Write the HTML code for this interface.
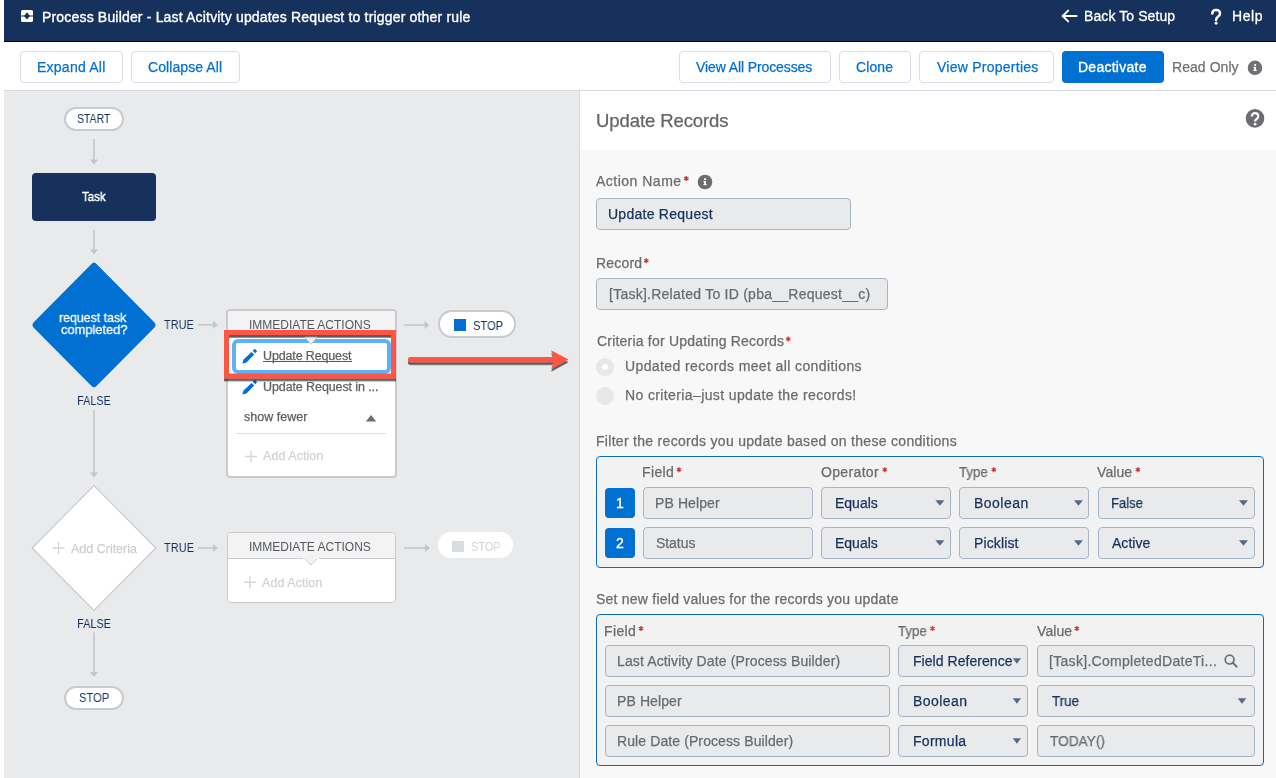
<!DOCTYPE html><html><head><meta charset="utf-8"><style>
html,body{margin:0;padding:0;width:1276px;height:778px;overflow:hidden;background:#fff;font-family:"Liberation Sans", sans-serif;}
.t{-webkit-text-stroke:0.25px currentColor;will-change:transform;-webkit-font-smoothing:antialiased;}
</style></head><body>
<div style="position:absolute;left:4px;top:0px;width:1272px;height:41px;box-sizing:border-box;background:#16325c"></div><div style="position:absolute;left:4px;top:41px;width:1272px;height:1px;box-sizing:border-box;background:#000"></div><svg style="position:absolute;left:0;top:0" width="1276" height="42">
<rect x="21" y="10" width="12" height="12" rx="1.6" fill="#fff"/>
<rect x="21" y="15" width="12" height="2" fill="#8a98ad"/>
<path d="M27 12.2 L30 16 L27 19.6 L24 16 Z" fill="#16325c"/>
<path d="M1068.2 10.6 L1062.6 16 L1068.2 21.4 M1062.8 16 H1076.6" stroke="#fff" stroke-width="1.9" fill="none" stroke-linecap="round" stroke-linejoin="round"/>
<path d="M1212.3 13.4 C1212.3 11.2 1214 9.9 1216.1 9.9 C1218.4 9.9 1220 11.3 1220 13.4 C1220 15.4 1218.6 16.2 1217.4 17.2 C1216.4 18 1216.1 18.7 1216.1 20" stroke="#fff" stroke-width="2.5" fill="none" stroke-linecap="round"/>
<circle cx="1216.1" cy="23.3" r="1.45" fill="#fff"/>
</svg><div style="position:absolute;left:4px;top:90px;width:1272px;height:1px;box-sizing:border-box;background:#d8d8dc"></div><div style="position:absolute;left:20px;top:51px;width:103px;height:32px;box-sizing:border-box;background:#fff;border:1px solid #d8dde6;border-radius:4px"></div><div style="position:absolute;left:131px;top:51px;width:109px;height:32px;box-sizing:border-box;background:#fff;border:1px solid #d8dde6;border-radius:4px"></div><div style="position:absolute;left:679px;top:51px;width:152px;height:32px;box-sizing:border-box;background:#fff;border:1px solid #d8dde6;border-radius:4px"></div><div style="position:absolute;left:839px;top:51px;width:72px;height:32px;box-sizing:border-box;background:#fff;border:1px solid #d8dde6;border-radius:4px"></div><div style="position:absolute;left:919px;top:51px;width:135px;height:32px;box-sizing:border-box;background:#fff;border:1px solid #d8dde6;border-radius:4px"></div><div style="position:absolute;left:1062px;top:51px;width:102px;height:32px;box-sizing:border-box;background:#0070d2;border-radius:4px"></div><svg style="position:absolute;left:1247px;top:60px" width="16" height="16"><circle cx="8" cy="7.8" r="7.3" fill="#6f7174"/>
<rect x="7.1" y="6.9" width="1.9" height="4" fill="#fff"/><circle cx="8.1" cy="5.0" r="1.1" fill="#fff"/><rect x="6.4" y="6.9" width="1.5" height="1.1" fill="#fff"/><rect x="6.3" y="9.9" width="3.6" height="1.0" fill="#fff"/></svg><div style="position:absolute;left:4px;top:91px;width:575px;height:687px;box-sizing:border-box;background:#e9eaec"></div><div style="position:absolute;left:579px;top:91px;width:1px;height:687px;box-sizing:border-box;background:#d6d7da"></div><div style="position:absolute;left:64px;top:107px;width:60px;height:24px;box-sizing:border-box;background:#fff;border:2px solid #c7cace;border-radius:12.0px"></div><div style="position:absolute;left:32px;top:173px;width:124px;height:48px;box-sizing:border-box;background:#16325c;border-radius:4px"></div><div style="position:absolute;left:226px;top:309px;width:171px;height:169px;box-sizing:border-box;background:#fff;border:2px solid #c7cace;border-radius:4px"></div><div style="position:absolute;left:228px;top:311px;width:167px;height:26px;box-sizing:border-box;background:#f3f3f3;border-radius:2px 2px 0 0"></div><div style="position:absolute;left:438px;top:310px;width:78px;height:28px;box-sizing:border-box;background:#fff;border:2px solid #c7cace;border-radius:14.0px"></div><div style="position:absolute;left:454px;top:319px;width:12px;height:12px;box-sizing:border-box;background:#0070d2"></div><div style="position:absolute;left:231.5px;top:338.5px;width:159.5px;height:35.5px;box-sizing:border-box;background:#fff;border:4px solid #5eb0fb;border-radius:6px"></div><svg style="position:absolute;left:238px;top:345px" width="24" height="24" viewBox="0 0 24 24"><path d="M4.3 18.6 L5.5 14.6 L13.6 6.9 L16.2 9.4 L8.5 17.4 Z M14.7 5.8 L16.3 4.2 Q16.8 3.8 17.3 4.2 L18.8 5.7 Q19.2 6.2 18.8 6.6 L17.2 8.2 Z" fill="#0070d2"/></svg><div style="position:absolute;left:263px;top:361px;width:89px;height:1px;box-sizing:border-box;background:#0070d2"></div><svg style="position:absolute;left:238px;top:376px" width="24" height="24" viewBox="0 0 24 24"><path d="M4.3 18.6 L5.5 14.6 L13.6 6.9 L16.2 9.4 L8.5 17.4 Z M14.7 5.8 L16.3 4.2 Q16.8 3.8 17.3 4.2 L18.8 5.7 Q19.2 6.2 18.8 6.6 L17.2 8.2 Z" fill="#0070d2"/></svg><svg style="position:absolute;left:0;top:0" width="580" height="778"><path d="M365.8 421.4 L376.2 421.4 L371 415 Z" fill="#706e6b"/></svg><div style="position:absolute;left:236px;top:433px;width:150px;height:1px;box-sizing:border-box;background:#d8dde6"></div><svg style="position:absolute;left:0;top:0" width="580" height="778"><path d="M251 450.5 V462.5 M245 456.5 H257" stroke="#d4d6d9" stroke-width="1.4"/></svg><svg style="position:absolute;left:0;top:0" width="580" height="778">
<defs><filter id="sh" x="-20%" y="-20%" width="140%" height="160%"><feDropShadow dx="0" dy="2.7" stdDeviation="0.6" flood-color="#000" flood-opacity="0.62"/></filter></defs>
<g filter="url(#sh)">
<rect x="226.5" y="332.5" width="167" height="43.5" fill="none" stroke="#ff5545" stroke-width="5"/>
<path d="M410.5 359.6 L556 359.6" stroke="#ff5545" stroke-width="5.2" stroke-linecap="round"/>
<path d="M551 350.3 L568.6 359.6 L551 368.9 L555 359.6 Z" fill="#ff5545"/>
</g>
<path d="M305 337.3 L317 337.3 L311 344.3 Z" fill="#f0f0f0" stroke="#c3c6cb" stroke-width="1" stroke-linejoin="round"/>
</svg><div style="position:absolute;left:64px;top:686px;width:60px;height:24px;box-sizing:border-box;background:#fff;border:2px solid #c7cace;border-radius:12.0px"></div><div style="position:absolute;left:226.5px;top:532px;width:169.0px;height:70.5px;box-sizing:border-box;background:#fff;border:1px solid #c7cace;border-radius:4px"></div><div style="position:absolute;left:227.5px;top:533px;width:167.0px;height:26px;box-sizing:border-box;background:#f3f3f3;border-bottom:1px solid #c7cace;border-radius:3px 3px 0 0"></div><svg style="position:absolute;left:0;top:0" width="580" height="778"><path d="M304.5 558.5 L317.5 558.5 L311 565 Z" fill="#f3f3f3" stroke="#c7cace" stroke-width="1"/><rect x="303" y="557.6" width="16" height="1.4" fill="#f3f3f3"/></svg><svg style="position:absolute;left:0;top:0" width="580" height="778"><path d="M250 576.2 V588.2 M244 582.2 H256" stroke="#d4d6d9" stroke-width="1.4"/></svg><div style="position:absolute;left:438px;top:532px;width:75px;height:26px;box-sizing:border-box;background:#fff;border:0px solid #fff;border-radius:13.0px"></div><div style="position:absolute;left:452px;top:540.5px;width:12px;height:11.0px;box-sizing:border-box;background:#d8dce0"></div><svg style="position:absolute;left:0;top:0" width="580" height="778"><line x1="94" y1="139" x2="94" y2="161.5" stroke="#c2c6cb" stroke-width="1.6"/><path d="M90 159.5 L98 159.5 L94 164.5 Z" fill="#c2c6cb"/><line x1="94" y1="230" x2="94" y2="251.5" stroke="#c2c6cb" stroke-width="1.6"/><path d="M90 249.5 L98 249.5 L94 254.5 Z" fill="#c2c6cb"/><path d="M94 262.5 Q95.5 262.5 96.5 264 L154.5 322.5 Q156.5 325 154.5 327.5 L96.5 386 Q94 388.5 91.5 386 L33.5 327.5 Q31.5 325 33.5 322.5 L91.5 264 Q92.5 262.5 94 262.5 Z" fill="#0070d2"/><line x1="198" y1="324.8" x2="215" y2="324.8" stroke="#c2c6cb" stroke-width="1.6"/><path d="M213 320.8 L213 328.8 L218 324.8 Z" fill="#c2c6cb"/><line x1="94" y1="410" x2="94" y2="474.5" stroke="#c2c6cb" stroke-width="1.6"/><path d="M90 472.5 L98 472.5 L94 477.5 Z" fill="#c2c6cb"/><line x1="404" y1="325" x2="426.5" y2="325" stroke="#c2c6cb" stroke-width="1.6"/><path d="M424.5 321 L424.5 329 L429.5 325 Z" fill="#c2c6cb"/><path d="M94 485.6 L155.8 548 L94 610.4 L32.2 548 Z" fill="#fff" stroke="#c6c9ce" stroke-width="1.1" stroke-linejoin="round"/><path d="M58.5 542 V554 M52.5 548 H64.5" stroke="#d4d6d9" stroke-width="1.4"/><line x1="198" y1="548" x2="215" y2="548" stroke="#c2c6cb" stroke-width="1.6"/><path d="M213 544 L213 552 L218 548 Z" fill="#c2c6cb"/><line x1="94" y1="632.5" x2="94" y2="674" stroke="#c2c6cb" stroke-width="1.6"/><path d="M90 672 L98 672 L94 677 Z" fill="#c2c6cb"/><line x1="404" y1="548" x2="427" y2="548" stroke="#c2c6cb" stroke-width="1.6"/><path d="M425 544 L425 552 L430 548 Z" fill="#c2c6cb"/></svg><div style="position:absolute;left:580px;top:91px;width:696px;height:59px;box-sizing:border-box;background:#fff"></div><div style="position:absolute;left:580px;top:150px;width:696px;height:628px;box-sizing:border-box;background:#f8f8f8"></div><svg style="position:absolute;left:1245px;top:108px" width="20" height="21"><circle cx="10" cy="10.4" r="9.3" fill="#6b6d70"/>
<path d="M6.8 8.4 C6.8 6.4 8.2 5.2 10 5.2 C12 5.2 13.3 6.4 13.3 8.3 C13.3 10 12 10.7 11.1 11.4 C10.5 11.9 10.1 12.4 10.1 13.6" stroke="#fff" stroke-width="2.2" fill="none"/><circle cx="10.1" cy="16.2" r="1.35" fill="#fff"/></svg><svg style="position:absolute;left:0;top:0" width="1276" height="778"><path d="M686.30 176.10 L686.30 181.10 M684.13 177.35 L688.47 179.85 M688.47 177.35 L684.13 179.85 " stroke="#c23934" stroke-width="1.3"/></svg><svg style="position:absolute;left:697px;top:174px" width="16" height="16"><circle cx="8" cy="8" r="7.3" fill="#6b6d70"/>
<rect x="7.1" y="7.1" width="1.9" height="4" fill="#fff"/><circle cx="8.1" cy="5.2" r="1.1" fill="#fff"/><rect x="6.4" y="7.1" width="1.5" height="1.1" fill="#fff"/><rect x="6.3" y="10.1" width="3.6" height="1.0" fill="#fff"/></svg><div style="position:absolute;left:596px;top:198px;width:255px;height:32px;box-sizing:border-box;background:#e9eaec;border:1px solid #a6b4c6;border-radius:4px"></div><svg style="position:absolute;left:0;top:0" width="1276" height="778"><path d="M646.30 258.30 L646.30 263.30 M644.13 259.55 L648.47 262.05 M648.47 259.55 L644.13 262.05 " stroke="#c23934" stroke-width="1.3"/></svg><div style="position:absolute;left:596px;top:278px;width:292px;height:32px;box-sizing:border-box;background:#e9eaec;border:1px solid #a6b4c6;border-radius:4px"></div><svg style="position:absolute;left:0;top:0" width="1276" height="778"><path d="M788.20 336.50 L788.20 341.50 M786.03 337.75 L790.37 340.25 M790.37 337.75 L786.03 340.25 " stroke="#c23934" stroke-width="1.3"/></svg><svg style="position:absolute;left:0;top:0" width="1276" height="778">
<circle cx="605" cy="367" r="9" fill="#e6e7e9"/><circle cx="605" cy="367" r="3" fill="#fff"/>
<circle cx="605" cy="396" r="9" fill="#e6e7e9"/></svg><div style="position:absolute;left:596px;top:456px;width:668px;height:112px;box-sizing:border-box;background:#f2f2f2;border:1px solid #0e6bb9;border-radius:4px"></div><svg style="position:absolute;left:0;top:0" width="1276" height="778"><path d="M679.00 467.20 L679.00 472.20 M676.83 468.45 L681.17 470.95 M681.17 468.45 L676.83 470.95 " stroke="#c23934" stroke-width="1.3"/></svg><svg style="position:absolute;left:0;top:0" width="1276" height="778"><path d="M884.80 467.20 L884.80 472.20 M882.63 468.45 L886.97 470.95 M886.97 468.45 L882.63 470.95 " stroke="#c23934" stroke-width="1.3"/></svg><svg style="position:absolute;left:0;top:0" width="1276" height="778"><path d="M993.80 467.20 L993.80 472.20 M991.63 468.45 L995.97 470.95 M995.97 468.45 L991.63 470.95 " stroke="#c23934" stroke-width="1.3"/></svg><svg style="position:absolute;left:0;top:0" width="1276" height="778"><path d="M1137.90 467.20 L1137.90 472.20 M1135.73 468.45 L1140.07 470.95 M1140.07 468.45 L1135.73 470.95 " stroke="#c23934" stroke-width="1.3"/></svg><div style="position:absolute;left:605px;top:488px;width:30px;height:30px;box-sizing:border-box;background:#0070d2;border-radius:4px"></div><div style="position:absolute;left:643px;top:487px;width:169.5px;height:32px;box-sizing:border-box;background:#e9eaec;border:1px solid #a6b4c6;border-radius:4px"></div><div style="position:absolute;left:821px;top:487px;width:130px;height:32px;box-sizing:border-box;background:#e9eaec;border:1px solid #a6b4c6;border-radius:4px"></div><svg style="position:absolute;left:0;top:0" width="1276" height="778"><path d="M935.4 500.2 L944.4 500.2 L939.9 505.8 Z" fill="#54698d"/></svg><div style="position:absolute;left:959px;top:487px;width:130px;height:32px;box-sizing:border-box;background:#e9eaec;border:1px solid #a6b4c6;border-radius:4px"></div><svg style="position:absolute;left:0;top:0" width="1276" height="778"><path d="M1074 500.2 L1083 500.2 L1078.5 505.8 Z" fill="#54698d"/></svg><div style="position:absolute;left:1097.5px;top:487px;width:157.0px;height:32px;box-sizing:border-box;background:#e9eaec;border:1px solid #a6b4c6;border-radius:4px"></div><svg style="position:absolute;left:0;top:0" width="1276" height="778"><path d="M1239 500.2 L1248 500.2 L1243.5 505.8 Z" fill="#54698d"/></svg><div style="position:absolute;left:605px;top:528px;width:30px;height:30px;box-sizing:border-box;background:#0070d2;border-radius:4px"></div><div style="position:absolute;left:643px;top:527px;width:169.5px;height:32px;box-sizing:border-box;background:#e9eaec;border:1px solid #a6b4c6;border-radius:4px"></div><div style="position:absolute;left:821px;top:527px;width:130px;height:32px;box-sizing:border-box;background:#e9eaec;border:1px solid #a6b4c6;border-radius:4px"></div><svg style="position:absolute;left:0;top:0" width="1276" height="778"><path d="M935.4 540.2 L944.4 540.2 L939.9 545.8 Z" fill="#54698d"/></svg><div style="position:absolute;left:959px;top:527px;width:130px;height:32px;box-sizing:border-box;background:#e9eaec;border:1px solid #a6b4c6;border-radius:4px"></div><svg style="position:absolute;left:0;top:0" width="1276" height="778"><path d="M1074 540.2 L1083 540.2 L1078.5 545.8 Z" fill="#54698d"/></svg><div style="position:absolute;left:1097.5px;top:527px;width:157.0px;height:32px;box-sizing:border-box;background:#e9eaec;border:1px solid #a6b4c6;border-radius:4px"></div><svg style="position:absolute;left:0;top:0" width="1276" height="778"><path d="M1239 540.2 L1248 540.2 L1243.5 545.8 Z" fill="#54698d"/></svg><div style="position:absolute;left:596px;top:614px;width:668px;height:152px;box-sizing:border-box;background:#f2f2f2;border:1px solid #0e6bb9;border-radius:4px"></div><svg style="position:absolute;left:0;top:0" width="1276" height="778"><path d="M641.00 626.00 L641.00 631.00 M638.83 627.25 L643.17 629.75 M643.17 627.25 L638.83 629.75 " stroke="#c23934" stroke-width="1.3"/></svg><svg style="position:absolute;left:0;top:0" width="1276" height="778"><path d="M932.50 626.00 L932.50 631.00 M930.33 627.25 L934.67 629.75 M934.67 627.25 L930.33 629.75 " stroke="#c23934" stroke-width="1.3"/></svg><svg style="position:absolute;left:0;top:0" width="1276" height="778"><path d="M1076.80 626.00 L1076.80 631.00 M1074.63 627.25 L1078.97 629.75 M1078.97 627.25 L1074.63 629.75 " stroke="#c23934" stroke-width="1.3"/></svg><div style="position:absolute;left:605px;top:645px;width:285px;height:32px;box-sizing:border-box;background:#e9eaec;border:1px solid #a6b4c6;border-radius:4px"></div><div style="position:absolute;left:898px;top:645px;width:129.5px;height:32px;box-sizing:border-box;background:#e9eaec;border:1px solid #a6b4c6;border-radius:4px"></div><svg style="position:absolute;left:0;top:0" width="1276" height="778"><path d="M1012.8 658.2 L1021 658.2 L1016.9 663.8 Z" fill="#54698d"/></svg><div style="position:absolute;left:1036.5px;top:645px;width:218.0px;height:32px;box-sizing:border-box;background:#e9eaec;border:1px solid #a6b4c6;border-radius:4px"></div><div style="position:absolute;left:605px;top:685px;width:285px;height:32px;box-sizing:border-box;background:#e9eaec;border:1px solid #a6b4c6;border-radius:4px"></div><div style="position:absolute;left:898px;top:685px;width:129.5px;height:32px;box-sizing:border-box;background:#e9eaec;border:1px solid #a6b4c6;border-radius:4px"></div><svg style="position:absolute;left:0;top:0" width="1276" height="778"><path d="M1012.8 698.2 L1021 698.2 L1016.9 703.8 Z" fill="#54698d"/></svg><div style="position:absolute;left:1036.5px;top:685px;width:218.0px;height:32px;box-sizing:border-box;background:#e9eaec;border:1px solid #a6b4c6;border-radius:4px"></div><svg style="position:absolute;left:0;top:0" width="1276" height="778"><path d="M1237.7 698.2 L1246.3 698.2 L1242.0 703.8 Z" fill="#54698d"/></svg><div style="position:absolute;left:605px;top:725px;width:285px;height:32px;box-sizing:border-box;background:#e9eaec;border:1px solid #a6b4c6;border-radius:4px"></div><div style="position:absolute;left:898px;top:725px;width:129.5px;height:32px;box-sizing:border-box;background:#e9eaec;border:1px solid #a6b4c6;border-radius:4px"></div><svg style="position:absolute;left:0;top:0" width="1276" height="778"><path d="M1012.8 738.2 L1021 738.2 L1016.9 743.8 Z" fill="#54698d"/></svg><div style="position:absolute;left:1036.5px;top:725px;width:218.0px;height:32px;box-sizing:border-box;background:#e9eaec;border:1px solid #a6b4c6;border-radius:4px"></div><svg style="position:absolute;left:1222px;top:652.2px" width="18" height="18"><circle cx="7.6" cy="7.6" r="4.4" stroke="#6b6d70" stroke-width="1.7" fill="none"/><path d="M10.8 10.8 L14.6 14.6" stroke="#6b6d70" stroke-width="2" stroke-linecap="round"/></svg>
<div class="t" style="position:absolute;left:41.50px;top:10.00px;font-size:14px;line-height:14px;letter-spacing:0.176px;color:#fff;font-weight:400;white-space:nowrap;-webkit-text-stroke:0.35px #fff;">Process Builder - Last Acitvity updates Request to trigger other rule</div><div class="t" style="position:absolute;left:1084.40px;top:9.00px;font-size:14px;line-height:14px;letter-spacing:0.093px;color:#fff;font-weight:400;white-space:nowrap;-webkit-text-stroke:0.3px #fff;">Back To Setup</div><div class="t" style="position:absolute;left:1231.80px;top:9.00px;font-size:14px;line-height:14px;letter-spacing:0.564px;color:#fff;font-weight:400;white-space:nowrap;-webkit-text-stroke:0.3px #fff;">Help</div><div class="t" style="position:absolute;left:36.60px;top:60.00px;font-size:14px;line-height:14px;letter-spacing:0.242px;color:#0070d2;font-weight:400;white-space:nowrap;">Expand All</div><div class="t" style="position:absolute;left:148.20px;top:60.00px;font-size:14px;line-height:14px;letter-spacing:0.081px;color:#0070d2;font-weight:400;white-space:nowrap;">Collapse All</div><div class="t" style="position:absolute;left:696.30px;top:60.00px;font-size:14px;line-height:14px;letter-spacing:-0.105px;color:#0070d2;font-weight:400;white-space:nowrap;">View All Processes</div><div class="t" style="position:absolute;left:856.20px;top:60.00px;font-size:14px;line-height:14px;letter-spacing:0.102px;color:#0070d2;font-weight:400;white-space:nowrap;">Clone</div><div class="t" style="position:absolute;left:937.40px;top:60.00px;font-size:14px;line-height:14px;letter-spacing:0.251px;color:#0070d2;font-weight:400;white-space:nowrap;">View Properties</div><div class="t" style="position:absolute;left:1078.40px;top:60.00px;font-size:14px;line-height:14px;letter-spacing:0.260px;color:#fff;font-weight:400;white-space:nowrap;-webkit-text-stroke:0.35px #fff;">Deactivate</div><div class="t" style="position:absolute;left:1172.00px;top:60.00px;font-size:14px;line-height:14px;letter-spacing:0.057px;color:#6f7174;font-weight:400;white-space:nowrap;">Read Only</div><div class="t" style="position:absolute;left:77.30px;top:113.00px;font-size:12.5px;line-height:12.5px;letter-spacing:0.000px;color:#16325c;font-weight:400;white-space:nowrap;transform:scaleX(0.8362);transform-origin:0.00px 0;-webkit-text-stroke:0;">START</div><div class="t" style="position:absolute;left:82.00px;top:190.00px;font-size:13px;line-height:13px;letter-spacing:0.000px;color:#fff;font-weight:400;white-space:nowrap;transform:scaleX(0.8814);transform-origin:0.00px 0;-webkit-text-stroke:0.45px #fff;">Task</div><div class="t" style="position:absolute;left:58.60px;top:311.00px;font-size:13.5px;line-height:13.5px;letter-spacing:0.000px;color:#fff;font-weight:400;white-space:nowrap;transform:scaleX(0.9161);transform-origin:0.00px 0;-webkit-text-stroke:0.3px #fff;">request task</div><div class="t" style="position:absolute;left:61.00px;top:323.00px;font-size:13.5px;line-height:13.5px;letter-spacing:0.000px;color:#fff;font-weight:400;white-space:nowrap;transform:scaleX(0.9526);transform-origin:0.00px 0;-webkit-text-stroke:0.3px #fff;">completed?</div><div class="t" style="position:absolute;left:164.00px;top:319.00px;font-size:12.5px;line-height:12.5px;letter-spacing:0.000px;color:#16325c;font-weight:400;white-space:nowrap;transform:scaleX(0.8727);transform-origin:0.00px 0;-webkit-text-stroke:0;">TRUE</div><div class="t" style="position:absolute;left:76.90px;top:395.00px;font-size:12.5px;line-height:12.5px;letter-spacing:0.000px;color:#16325c;font-weight:400;white-space:nowrap;transform:scaleX(0.8650);transform-origin:1.00px 0;-webkit-text-stroke:0;">FALSE</div><div class="t" style="position:absolute;left:249.00px;top:319.00px;font-size:12px;line-height:12px;letter-spacing:-0.009px;color:#54585d;font-weight:400;white-space:nowrap;-webkit-text-stroke:0;">IMMEDIATE ACTIONS</div><div class="t" style="position:absolute;left:472.70px;top:319.00px;font-size:13px;line-height:13px;letter-spacing:0.000px;color:#16325c;font-weight:400;white-space:nowrap;transform:scaleX(0.8554);transform-origin:0.00px 0;-webkit-text-stroke:0;">STOP</div><div class="t" style="position:absolute;left:263.00px;top:350.00px;font-size:12.5px;line-height:12.5px;letter-spacing:-0.143px;color:#5d6064;font-weight:400;white-space:nowrap;">Update Request</div><div class="t" style="position:absolute;left:263.00px;top:381.00px;font-size:12.5px;line-height:12.5px;letter-spacing:-0.098px;color:#5d6064;font-weight:400;white-space:nowrap;">Update Request in ...</div><div class="t" style="position:absolute;left:243.70px;top:411.00px;font-size:12.5px;line-height:12.5px;letter-spacing:0.016px;color:#5d6064;font-weight:400;white-space:nowrap;">show fewer</div><div class="t" style="position:absolute;left:263.00px;top:450.00px;font-size:12.5px;line-height:12.5px;letter-spacing:0.055px;color:#d0d2d5;font-weight:400;white-space:nowrap;">Add Action</div><div class="t" style="position:absolute;left:71.00px;top:543.00px;font-size:12.5px;line-height:12.5px;letter-spacing:-0.004px;color:#ccced2;font-weight:400;white-space:nowrap;">Add Criteria</div><div class="t" style="position:absolute;left:164.00px;top:542.00px;font-size:12.5px;line-height:12.5px;letter-spacing:0.000px;color:#16325c;font-weight:400;white-space:nowrap;transform:scaleX(0.8816);transform-origin:0.00px 0;-webkit-text-stroke:0;">TRUE</div><div class="t" style="position:absolute;left:76.60px;top:618.00px;font-size:12.5px;line-height:12.5px;letter-spacing:0.000px;color:#16325c;font-weight:400;white-space:nowrap;transform:scaleX(0.8703);transform-origin:1.00px 0;-webkit-text-stroke:0;">FALSE</div><div class="t" style="position:absolute;left:79.00px;top:692.00px;font-size:12.5px;line-height:12.5px;letter-spacing:0.000px;color:#16325c;font-weight:400;white-space:nowrap;transform:scaleX(0.8963);transform-origin:0.00px 0;-webkit-text-stroke:0;">STOP</div><div class="t" style="position:absolute;left:248.70px;top:541.00px;font-size:12px;line-height:12px;letter-spacing:0.003px;color:#54585d;font-weight:400;white-space:nowrap;-webkit-text-stroke:0;">IMMEDIATE ACTIONS</div><div class="t" style="position:absolute;left:261.90px;top:577.00px;font-size:12.5px;line-height:12.5px;letter-spacing:0.055px;color:#d0d2d5;font-weight:400;white-space:nowrap;">Add Action</div><div class="t" style="position:absolute;left:471.20px;top:540.00px;font-size:13px;line-height:13px;letter-spacing:0.000px;color:#d3d6da;font-weight:400;white-space:nowrap;transform:scaleX(0.8380);transform-origin:0.00px 0;-webkit-text-stroke:0;">STOP</div><div class="t" style="position:absolute;left:595.50px;top:112.00px;font-size:18.5px;line-height:18.5px;letter-spacing:-0.087px;color:#636568;font-weight:400;white-space:nowrap;">Update Records</div><div class="t" style="position:absolute;left:596.20px;top:174.00px;font-size:14px;line-height:14px;letter-spacing:0.494px;color:#696b6e;font-weight:400;white-space:nowrap;">Action Name</div><div class="t" style="position:absolute;left:608.30px;top:207.00px;font-size:14px;line-height:14px;letter-spacing:0.262px;color:#16325c;font-weight:400;white-space:nowrap;">Update Request</div><div class="t" style="position:absolute;left:595.60px;top:256.00px;font-size:14px;line-height:14px;letter-spacing:0.191px;color:#696b6e;font-weight:400;white-space:nowrap;">Record</div><div class="t" style="position:absolute;left:608.60px;top:287.00px;font-size:14px;line-height:14px;letter-spacing:0.252px;color:#696b6e;font-weight:400;white-space:nowrap;">[Task].Related To ID (pba__Request__c)</div><div class="t" style="position:absolute;left:596.50px;top:334.00px;font-size:14px;line-height:14px;letter-spacing:0.207px;color:#696b6e;font-weight:400;white-space:nowrap;">Criteria for Updating Records</div><div class="t" style="position:absolute;left:625.30px;top:359.00px;font-size:14px;line-height:14px;letter-spacing:0.390px;color:#696b6e;font-weight:400;white-space:nowrap;">Updated records meet all conditions</div><div class="t" style="position:absolute;left:625.30px;top:388.00px;font-size:14px;line-height:14px;letter-spacing:0.380px;color:#696b6e;font-weight:400;white-space:nowrap;">No criteria–just update the records!</div><div class="t" style="position:absolute;left:595.60px;top:434.00px;font-size:14px;line-height:14px;letter-spacing:0.295px;color:#696b6e;font-weight:400;white-space:nowrap;">Filter the records you update based on these conditions</div><div class="t" style="position:absolute;left:642.10px;top:465.00px;font-size:14px;line-height:14px;letter-spacing:0.385px;color:#696b6e;font-weight:400;white-space:nowrap;">Field</div><div class="t" style="position:absolute;left:821.30px;top:465.00px;font-size:14px;line-height:14px;letter-spacing:0.345px;color:#696b6e;font-weight:400;white-space:nowrap;">Operator</div><div class="t" style="position:absolute;left:959.40px;top:465.00px;font-size:14px;line-height:14px;letter-spacing:0.000px;color:#696b6e;font-weight:400;white-space:nowrap;transform:scaleX(0.9488);transform-origin:0.00px 0;">Type</div><div class="t" style="position:absolute;left:1097.30px;top:465.00px;font-size:14px;line-height:14px;letter-spacing:0.080px;color:#696b6e;font-weight:400;white-space:nowrap;">Value</div><div class="t" style="position:absolute;left:615.50px;top:496.00px;font-size:14px;line-height:14px;letter-spacing:0.000px;color:#fff;font-weight:400;white-space:nowrap;-webkit-text-stroke:0.35px #fff;">1</div><div class="t" style="position:absolute;left:655.30px;top:496.00px;font-size:14px;line-height:14px;letter-spacing:0.107px;color:#696b6e;font-weight:400;white-space:nowrap;">PB Helper</div><div class="t" style="position:absolute;left:835.40px;top:496.00px;font-size:14px;line-height:14px;letter-spacing:-0.001px;color:#16325c;font-weight:400;white-space:nowrap;">Equals</div><div class="t" style="position:absolute;left:973.60px;top:496.00px;font-size:14px;line-height:14px;letter-spacing:0.468px;color:#16325c;font-weight:400;white-space:nowrap;">Boolean</div><div class="t" style="position:absolute;left:1111.40px;top:496.00px;font-size:14px;line-height:14px;letter-spacing:0.000px;color:#16325c;font-weight:400;white-space:nowrap;transform:scaleX(0.9268);transform-origin:1.00px 0;">False</div><div class="t" style="position:absolute;left:616.00px;top:536.00px;font-size:14px;line-height:14px;letter-spacing:0.000px;color:#fff;font-weight:400;white-space:nowrap;-webkit-text-stroke:0.35px #fff;">2</div><div class="t" style="position:absolute;left:656.30px;top:536.00px;font-size:14px;line-height:14px;letter-spacing:-0.058px;color:#696b6e;font-weight:400;white-space:nowrap;">Status</div><div class="t" style="position:absolute;left:835.40px;top:536.00px;font-size:14px;line-height:14px;letter-spacing:-0.001px;color:#16325c;font-weight:400;white-space:nowrap;">Equals</div><div class="t" style="position:absolute;left:973.60px;top:536.00px;font-size:14px;line-height:14px;letter-spacing:0.119px;color:#16325c;font-weight:400;white-space:nowrap;">Picklist</div><div class="t" style="position:absolute;left:1112.40px;top:536.00px;font-size:14px;line-height:14px;letter-spacing:0.032px;color:#16325c;font-weight:400;white-space:nowrap;">Active</div><div class="t" style="position:absolute;left:596.30px;top:592.00px;font-size:14px;line-height:14px;letter-spacing:0.231px;color:#696b6e;font-weight:400;white-space:nowrap;">Set new field values for the records you update</div><div class="t" style="position:absolute;left:604.00px;top:624.00px;font-size:14px;line-height:14px;letter-spacing:0.385px;color:#696b6e;font-weight:400;white-space:nowrap;">Field</div><div class="t" style="position:absolute;left:898.40px;top:624.00px;font-size:14px;line-height:14px;letter-spacing:0.000px;color:#696b6e;font-weight:400;white-space:nowrap;transform:scaleX(0.9488);transform-origin:0.00px 0;">Type</div><div class="t" style="position:absolute;left:1036.60px;top:624.00px;font-size:14px;line-height:14px;letter-spacing:0.080px;color:#696b6e;font-weight:400;white-space:nowrap;">Value</div><div class="t" style="position:absolute;left:617.30px;top:654.00px;font-size:14px;line-height:14px;letter-spacing:0.127px;color:#696b6e;font-weight:400;white-space:nowrap;">Last Activity Date (Process Builder)</div><div class="t" style="position:absolute;left:912.60px;top:654.00px;font-size:14px;line-height:14px;letter-spacing:0.047px;color:#16325c;font-weight:400;white-space:nowrap;">Field Reference</div><div class="t" style="position:absolute;left:1048.50px;top:654.00px;font-size:14px;line-height:14px;letter-spacing:0.302px;color:#696b6e;font-weight:400;white-space:nowrap;">[Task].CompletedDateTi...</div><div class="t" style="position:absolute;left:617.30px;top:694.00px;font-size:14px;line-height:14px;letter-spacing:0.107px;color:#696b6e;font-weight:400;white-space:nowrap;">PB Helper</div><div class="t" style="position:absolute;left:912.60px;top:694.00px;font-size:14px;line-height:14px;letter-spacing:0.451px;color:#16325c;font-weight:400;white-space:nowrap;">Boolean</div><div class="t" style="position:absolute;left:1051.70px;top:694.00px;font-size:14px;line-height:14px;letter-spacing:0.000px;color:#16325c;font-weight:400;white-space:nowrap;transform:scaleX(0.9550);transform-origin:0.00px 0;">True</div><div class="t" style="position:absolute;left:617.30px;top:734.00px;font-size:14px;line-height:14px;letter-spacing:0.102px;color:#696b6e;font-weight:400;white-space:nowrap;">Rule Date (Process Builder)</div><div class="t" style="position:absolute;left:912.60px;top:734.00px;font-size:14px;line-height:14px;letter-spacing:0.290px;color:#16325c;font-weight:400;white-space:nowrap;">Formula</div><div class="t" style="position:absolute;left:1049.50px;top:734.00px;font-size:14px;line-height:14px;letter-spacing:0.000px;color:#696b6e;font-weight:400;white-space:nowrap;transform:scaleX(0.9767);transform-origin:0.00px 0;">TODAY()</div>
</body></html>
